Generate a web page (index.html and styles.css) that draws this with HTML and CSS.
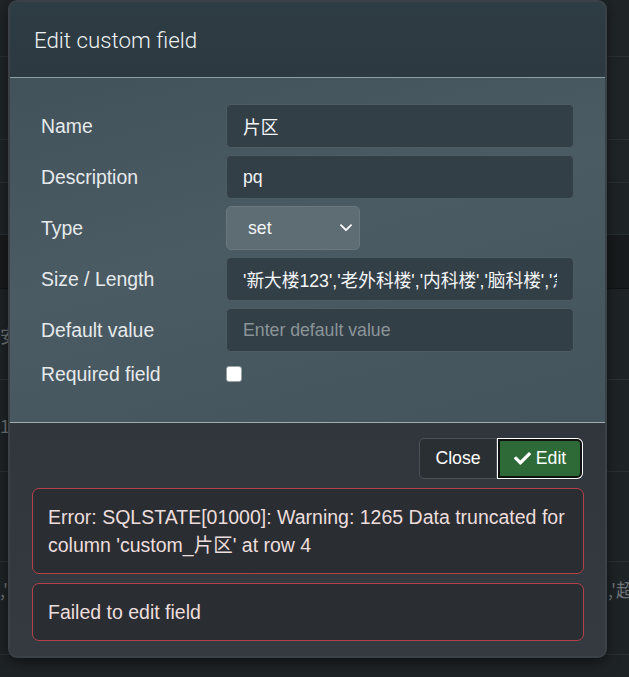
FILE: index.html
```html
<!DOCTYPE html>
<html lang="en">
<head>
<meta charset="utf-8">
<title>Edit custom field</title>
<link rel="stylesheet" href="styles.css">
</head>
<body>
<div class="bg">
  <div class="bgrow r1"></div>
  <div class="bgrow r2"></div>
  <div class="bgrow r3"></div>
  <div class="bgrow r4"></div>
  <div class="bgrow r5 thead"></div>
  <div class="bgrow r6"><span class="bg-left">安</span><span></span></div>
  <div class="bgrow r7"><span class="bg-left">12</span><span></span></div>
  <div class="bgrow r8"></div>
  <div class="bgrow r9"><span class="bg-left">,'参</span><span class="bg-right">,'超声楼</span></div>
  <div class="bgrow r10"></div>
</div>

<div class="modal">
  <div class="modal-header">
    <h4 class="modal-title">Edit custom field</h4>
  </div>
  <div class="modal-body">
    <form class="form">
      <label class="lbl" for="f-name">Name</label>
      <input class="ctl" id="f-name" type="text" value="片区">

      <label class="lbl" for="f-desc">Description</label>
      <input class="ctl" id="f-desc" type="text" value="pq">

      <label class="lbl" for="f-type">Type</label>
      <div class="select-wrap">
        <select class="sel" id="f-type"><option>set</option></select>
        <svg class="chev" viewBox="0 0 12 8" width="12" height="8"><path d="M1 1.2 L6 6.2 L11 1.2" fill="none" stroke="#ffffff" stroke-width="1.8" stroke-linecap="round" stroke-linejoin="round"/></svg>
      </div>

      <label class="lbl" for="f-size">Size / Length</label>
      <input class="ctl" id="f-size" type="text" value="'新大楼123','老外科楼','内科楼','脑科楼','急诊楼','超声楼'">

      <label class="lbl" for="f-def">Default value</label>
      <input class="ctl" id="f-def" type="text" placeholder="Enter default value">

      <label class="lbl" for="f-req">Required field</label>
      <div class="chk-wrap"><input class="chk" id="f-req" type="checkbox"></div>
    </form>
  </div>
  <div class="modal-footer">
    <div class="actions">
      <button class="btn btn-close" type="button">Close</button>
      <button class="btn btn-edit" type="button">
        <svg class="check" viewBox="0 0 512 512" width="17" height="17"><path fill="#ffffff" d="M173.898 439.404l-166.4-166.4c-9.997-9.997-9.997-26.206 0-36.204l36.203-36.204c9.997-9.998 26.207-9.998 36.204 0L192 312.69 432.095 72.596c9.997-9.997 26.207-9.997 36.204 0l36.203 36.204c9.997 9.997 9.997 26.206 0 36.204l-294.4 294.401c-9.998 9.997-26.207 9.997-36.204-.001z"/></svg>
        <span>Edit</span>
      </button>
    </div>
    <div class="alert">Error: SQLSTATE[01000]: Warning: 1265 Data truncated for column 'custom_片区' at row 4</div>
    <div class="alert">Failed to edit field</div>
  </div>
</div>
</body>
</html>
```

FILE: styles.css
```css
* { box-sizing: border-box; }

html, body {
  margin: 0;
  padding: 0;
}

body {
  background: #1e2326;
  font-family: "Liberation Sans", Arial, "Noto Sans CJK SC", sans-serif;
  width: 629px;
  height: 677px;
  overflow: hidden;
  position: relative;
}

/* background page (table behind the modal) */
.bg {
  display: flex;
  flex-direction: column;
}
.bgrow {
  border-bottom: 1px solid #2a3034;
  display: grid;
  grid-template-columns: 608px 1fr;
  align-items: start;
  color: #6d7376;
  font-family: "Noto Sans CJK SC", sans-serif;
  font-size: 18px;
  line-height: 26px;
  overflow: hidden;
  white-space: nowrap;
}
.r1 { height: 57px; background: #1f2427; }
.r2 { height: 83px; background: #1f2427; }
.r3 { height: 43px; background: #1f2427; }
.r4 { height: 52px; background: #1e2326; }
.r5 { height: 54px; }
.thead { background: #181b1d; border-bottom-color: #101214; }
.r6 { height: 91px; background: #1e2326; padding-top: 33px; }
.r7 { height: 92px; background: #1e2326; padding-top: 32px; }
.r8 { height: 90px; background: #1e2326; }
.r9 { height: 93px; background: #1e2326; padding-top: 14px; }
.r10 { height: 40px; background: #1e2326; }
.bg-left { overflow: hidden; }
.bg-right { overflow: hidden; }

/* modal */
.modal {
  position: absolute;
  left: 8px;
  top: 0;
  width: 599px;
  border: 2px solid #3a4247;
  border-radius: 9px;
  overflow: hidden;
  box-shadow: 0 4px 14px rgba(0, 0, 0, 0.5);
  background: #33393e;
}

.modal-header {
  height: 76px;
  display: flex;
  align-items: center;
  padding-left: 24px;
  background: linear-gradient(180deg, #2e3c44 0%, #2c3940 100%);
  border-bottom: 1px solid #8e9ea4;
}
.modal-title {
  margin: 0;
  font-family: Roboto, "Liberation Sans", sans-serif;
  font-weight: 300;
  font-size: 22.3px;
  line-height: 30px;
  color: #eef2f3;
}

.modal-body {
  padding: 26px 31px 33px 31px;
  background: linear-gradient(165deg, #42525b 0%, #4a5b64 45%, #47575f 75%, #44545c 100%);
  border-bottom: 1px solid #a2adb2;
}

.form {
  display: grid;
  grid-template-columns: 185px 1fr;
  grid-template-rows: repeat(5, 44px) 30px;
  row-gap: 7px;
  margin: 0;
}

.lbl {
  align-self: center;
  font-size: 19.4px;
  color: #e6eaec;
  line-height: 24px;
}

.ctl {
  height: 44px;
  width: 100%;
  background: #333f47;
  border: 1px solid #4d5b62;
  border-radius: 5px;
  padding: 0 16px;
  font-family: "Liberation Sans", Arial, "Noto Sans CJK SC", sans-serif;
  font-size: 17.7px;
  color: #f4f6f7;
  outline: none;
}
.ctl::placeholder { color: #8b9599; }

.select-wrap {
  position: relative;
  width: 134px;
  height: 44px;
}
.sel {
  appearance: none;
  -webkit-appearance: none;
  width: 100%;
  height: 100%;
  background: #5e6c73;
  border: 1px solid #6a787e;
  border-radius: 5px;
  padding: 0 0 0 21px;
  font-family: "Liberation Sans", Arial, sans-serif;
  font-size: 17.7px;
  color: #f4f6f7;
  outline: none;
}
.chev {
  position: absolute;
  right: 8px;
  top: 18px;
  pointer-events: none;
}

.chk-wrap {
  display: flex;
  align-items: center;
}
.chk {
  appearance: none;
  -webkit-appearance: none;
  margin: 0;
  width: 16px;
  height: 16px;
  background: #ffffff;
  border: 1px solid #9aa2a6;
  border-radius: 3px;
}

/* footer */
.modal-footer {
  padding: 15px 21px 15px 22px;
  background: linear-gradient(180deg, #30363b 0%, #343a3f 100%);
  display: flex;
  flex-direction: column;
  gap: 9px;
}

.actions {
  display: flex;
  justify-content: flex-end;
  align-items: center;
  padding-right: 2px;
}

.btn {
  font-family: "Liberation Sans", Arial, sans-serif;
  font-size: 17.7px;
  color: #ffffff;
  display: flex;
  align-items: center;
  justify-content: center;
  cursor: pointer;
}
.btn-close {
  height: 41px;
  width: 78px;
  background: #2a2f33;
  border: 1px solid #4a5258;
  border-radius: 5px 0 0 5px;
}
.btn-edit {
  height: 39px;
  width: 84px;
  gap: 5px;
  background: #2d6a37;
  border: 2px solid #0f1211;
  border-radius: 0 5px 5px 0;
  box-shadow: 0 0 0 1px #ffffff;
  margin-left: 1px;
}
.check { display: block; }

.alert {
  background: #2a2e32;
  border: 1px solid #b3414a;
  border-radius: 7px;
  padding: 14px 10px 14px 15px;
  font-size: 19.5px;
  line-height: 28px;
  color: #eddddd;
}
```
